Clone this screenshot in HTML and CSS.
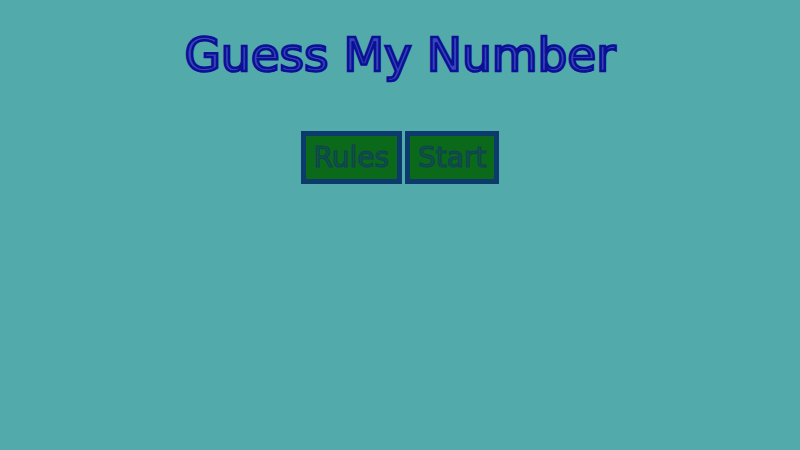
FILE: index.html
```html
<!DOCTYPE html>
<html>
<head>
<meta charset="utf-8">
<title>Guess My Number</title>
<link rel="stylesheet" href="styles.css">
</head>
<body>
<div class="game">
	<h1 class="title">Guess My Number</h1>
	<div class="menu">
		<button class="btn">Rules</button>
		<button class="btn">Start</button>
	</div>
</div>
</body>
</html>
```

FILE: styles.css
```css
* {margin:0; padding:0;}
body {background:#52aaab; font-family:"DejaVu Sans", sans-serif;}

.game {text-align:center; padding-top:27px;}
.title {font-size:47px; font-weight:normal; color:#3848bc; -webkit-text-stroke:2.6px #0c1096; line-height:56px;}
.menu {margin-top:48px; display:flex; justify-content:center; gap:3px;}
.btn {font-family:"DejaVu Sans", sans-serif; font-size:28px; line-height:33px; color:#0b5a2e; -webkit-text-stroke:1.2px #123e5c; background:#0a6a1a; border:5px solid #0c3a6c; padding:5px 8px; cursor:pointer;}
```
